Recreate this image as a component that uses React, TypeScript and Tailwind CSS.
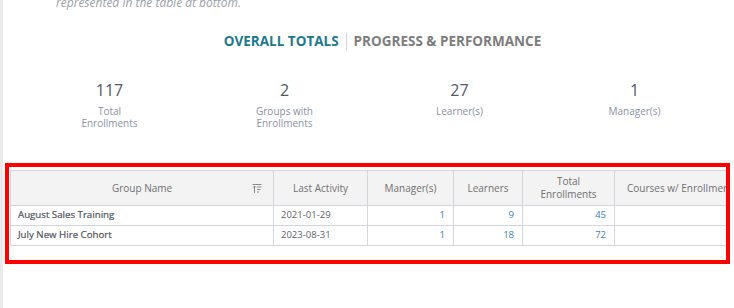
type GroupRow = {
  name: string;
  lastActivity: string;
  managers: number;
  learners: number;
  enrollments: number;
};

const STATS = [
  { value: "117", label: ["Total", "Enrollments"] },
  { value: "2", label: ["Groups with", "Enrollments"] },
  { value: "27", label: ["Learner(s)"] },
  { value: "1", label: ["Manager(s)"] },
];

const ROWS: GroupRow[] = [
  { name: "August Sales Training", lastActivity: "2021-01-29", managers: 1, learners: 9, enrollments: 45 },
  { name: "July New Hire Cohort", lastActivity: "2023-08-31", managers: 1, learners: 18, enrollments: 72 },
];

function SortIcon() {
  return (
    <svg width="10" height="9" viewBox="0 0 10 9" className="text-[#8a8a8a]">
      <path d="M0.5 0.5h9" stroke="currentColor" strokeWidth="1" />
      <path d="M2.5 2v7M1 3.5l1.5-1.5 1.5 1.5" stroke="currentColor" strokeWidth="1" fill="none" />
      <path d="M5 3h4.5M5 5.5h3.5M5 8h2" stroke="currentColor" strokeWidth="1" />
    </svg>
  );
}

export default function App() {
  return (
    <div className="flex h-[308px] w-[734px] overflow-hidden bg-white font-['Open_Sans',sans-serif]">
      <div className="w-[3px] shrink-0 bg-[#ebebeb]" />
      <div className="flex-1">
        <p className="ml-[53px] mt-[-5px] text-[12px] italic leading-[16px] text-[#9aa0a8]">
          represented in the table at bottom.
        </p>

        <div className="mt-[22px] flex h-[18px] items-center justify-center pl-[28px] text-[13.5px] font-bold leading-none">
          <span className="text-[#1d7a8c]">OVERALL TOTALS</span>
          <span className="mx-[7px] h-[18px] w-px bg-[#d4d4d4]" />
          <span className="text-[#7d7d7d]">PROGRESS &amp; PERFORMANCE</span>
        </div>

        <div className="ml-[19px] mt-[28px] grid w-[700px] grid-cols-4">
          {STATS.map((stat) => (
            <div key={stat.value + stat.label[0]} className="flex flex-col items-center">
              <span className="text-[16px] leading-[22px] text-[#535866]">{stat.value}</span>
              <span className="mt-[4px] text-center text-[10px] leading-[12px] text-[#8a92a2]">
                {stat.label.map((line) => (
                  <span key={line} className="block">
                    {line}
                  </span>
                ))}
              </span>
            </div>
          ))}
        </div>

        <div className="ml-[2px] mt-[34px] h-[101px] w-[725px] overflow-hidden border-[4px] border-[#ff0000] pl-px pt-[3px]">
          <table className="w-[850px] table-fixed border-collapse text-[10px] text-[#666a72]">
            <colgroup>
              <col className="w-[263px]" />
              <col className="w-[94px]" />
              <col className="w-[86px]" />
              <col className="w-[69px]" />
              <col className="w-[92px]" />
              <col className="w-[246px]" />
            </colgroup>
            <thead>
              <tr className="h-[35px] bg-[#f3f3f3] text-[#707070]">
                <th className="relative border border-[#d3d4dc] font-normal">
                  Group Name
                  <span className="absolute right-[11px] top-[13px]">
                    <SortIcon />
                  </span>
                </th>
                <th className="border border-[#d3d4dc] font-normal">Last Activity</th>
                <th className="border border-[#d3d4dc] font-normal">Manager(s)</th>
                <th className="border border-[#d3d4dc] font-normal">Learners</th>
                <th className="border border-[#d3d4dc] font-normal leading-[13px]">
                  Total
                  <br />
                  Enrollments
                </th>
                <th className="whitespace-nowrap border border-[#d3d4dc] pl-[12px] text-left font-normal">
                  Courses w/ Enrollments
                </th>
              </tr>
            </thead>
            <tbody className="text-[9.5px]">
              {ROWS.map((row) => (
                <tr key={row.name} className="h-[20px]">
                  <td className="border border-[#d3d4dc] px-[7px] text-[9.7px] text-[#4d525c] [-webkit-text-stroke:0.2px_#4d525c]">{row.name}</td>
                  <td className="border border-[#d3d4dc] px-[7px] text-[#5f636b]">{row.lastActivity}</td>
                  <td className="border border-[#d3d4dc] px-[8px] text-right text-[#3b7fb8]">{row.managers}</td>
                  <td className="border border-[#d3d4dc] px-[8px] text-right text-[#3b7fb8]">{row.learners}</td>
                  <td className="border border-[#d3d4dc] px-[8px] text-right text-[#3b7fb8]">{row.enrollments}</td>
                  <td className="border border-[#d3d4dc]" />
                </tr>
              ))}
            </tbody>
          </table>
        </div>
      </div>
    </div>
  );
}
